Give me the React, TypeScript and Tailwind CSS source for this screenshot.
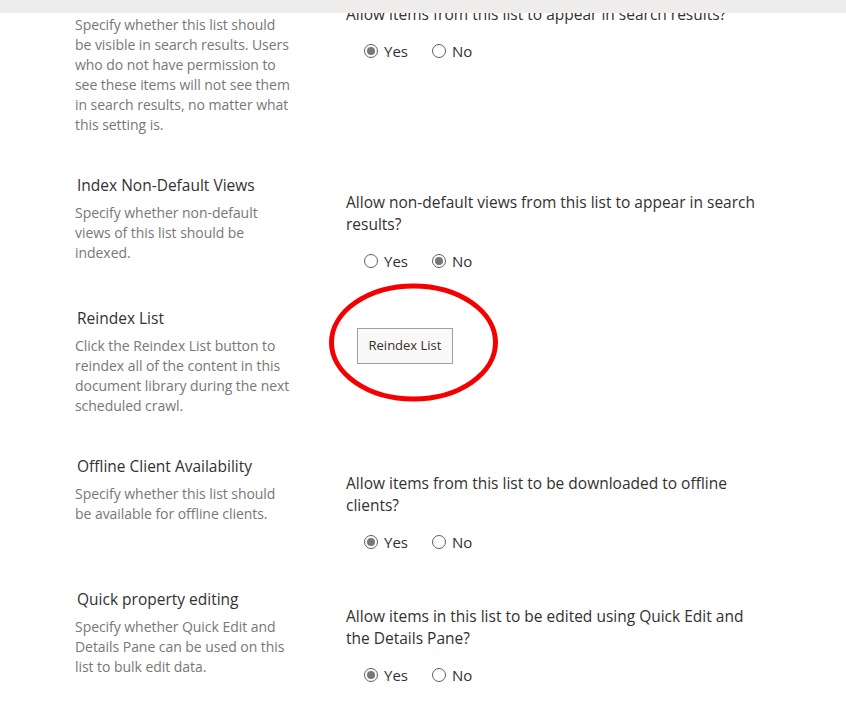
import React from "react";

function Radio({ label, checked }: { label: string; checked?: boolean }) {
  return (
    <label className="flex items-center h-[14px]">
      <span className="w-[14px] h-[14px] rounded-full border border-[#605e5c] flex items-center justify-center bg-white">
        {checked && <span className="w-[8px] h-[8px] rounded-full bg-[#797775]" />}
      </span>
      <span className="ml-[6px] text-[15px] leading-[14px] text-[#323130]">{label}</span>
    </label>
  );
}

function Radios({ yes }: { yes: boolean }) {
  return (
    <div className="mt-[19px] ml-[18px] flex items-center gap-[24px]">
      <Radio label="Yes" checked={yes} />
      <Radio label="No" checked={!yes} />
    </div>
  );
}

function Row({
  title,
  lines,
  children,
}: {
  title: string;
  lines: string[];
  children: React.ReactNode;
}) {
  return (
    <div className="flex items-start mb-[40px]">
      <div className="w-[215px] ml-[75px] shrink-0">
        <div className="pl-[2px] text-[15.5px] leading-[20px] text-[#323130]">{title}</div>
        <div className="mt-[8px] text-[14px] leading-[20px] text-[#797775] tracking-[-0.05px]">
          {lines.map((l, i) => (
            <div key={i} className="whitespace-nowrap">
              {l}
            </div>
          ))}
        </div>
      </div>
      <div className="ml-[56px] w-[416px] pt-[16px] relative">{children}</div>
    </div>
  );
}

export default function App() {
  return (
    <div className="relative w-[846px] h-[703px] overflow-hidden bg-white font-['Segoe_UI','Open_Sans',sans-serif]">
      <div className="absolute top-0 left-0 right-0 h-[13px] bg-[#eeedeb] z-10" />
      <div className="mt-[-13px]">
        <Row
          title="Search"
          lines={[
            "Specify whether this list should",
            "be visible in search results. Users",
            "who do not have permission to",
            "see these items will not see them",
            "in search results, no matter what",
            "this setting is.",
          ]}
        >
          <div className="text-[15.5px] leading-[22px] text-[#323130]">
            Allow items from this list to appear in search results?
          </div>
          <Radios yes={true} />
        </Row>
        <Row
          title="Index Non-Default Views"
          lines={["Specify whether non-default", "views of this list should be", "indexed."]}
        >
          <div className="text-[15.5px] leading-[22px] text-[#323130]">
            Allow non-default views from this list to appear in search results?
          </div>
          <Radios yes={false} />
        </Row>
        <Row
          title="Reindex List"
          lines={[
            "Click the Reindex List button to",
            "reindex all of the content in this",
            "document library during the next",
            "scheduled crawl.",
          ]}
        >
          <div className="relative mt-[4px] ml-[11px]">
            <button className="w-[96px] h-[36px] border border-[#a19f9d] bg-[#faf9f8] text-[13px] text-[#323130]">
              Reindex List
            </button>
            <svg
              className="absolute left-[-29px] top-[-45px]"
              width="171"
              height="120"
              viewBox="0 0 171 120"
            >
              <ellipse cx="85.5" cy="59.5" rx="82" ry="56.5" fill="none" stroke="#f40000" strokeWidth="5" />
            </svg>
          </div>
        </Row>
        <Row
          title="Offline Client Availability"
          lines={["Specify whether this list should", "be available for offline clients."]}
        >
          <div className="text-[15.5px] leading-[22px] text-[#323130]">
            Allow items from this list to be downloaded to offline clients?
          </div>
          <Radios yes={true} />
        </Row>
        <Row
          title="Quick property editing"
          lines={[
            "Specify whether Quick Edit and",
            "Details Pane can be used on this",
            "list to bulk edit data.",
          ]}
        >
          <div className="text-[15.5px] leading-[22px] text-[#323130]">
            Allow items in this list to be edited using Quick Edit and the Details Pane?
          </div>
          <Radios yes={true} />
        </Row>
      </div>
    </div>
  );
}
